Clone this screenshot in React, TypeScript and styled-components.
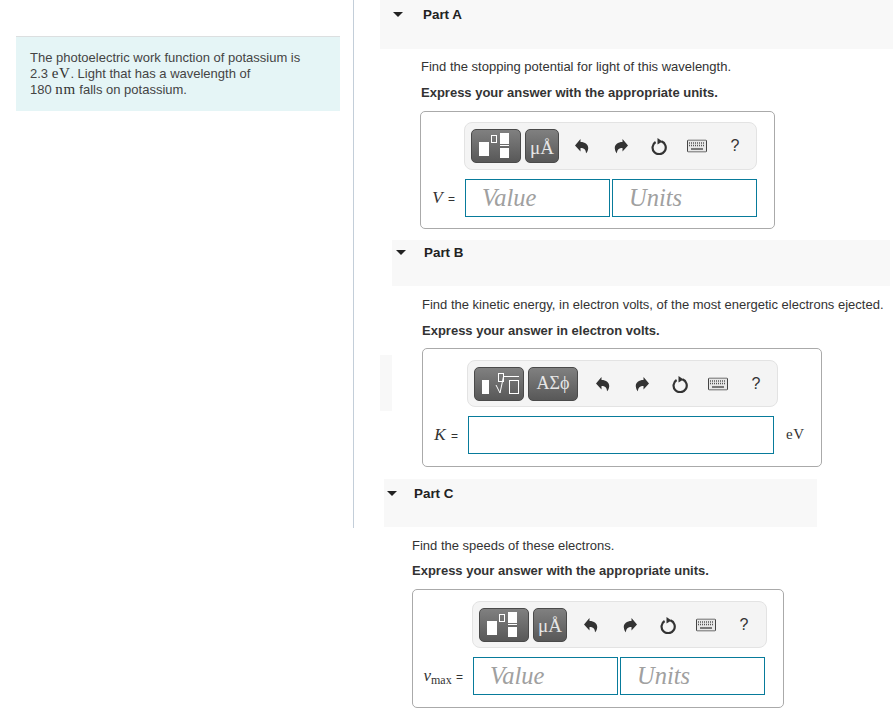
import React from "react";
import styled, { createGlobalStyle } from "styled-components";

const Global = createGlobalStyle`
  html, body { margin: 0; padding: 0; background: #fff; }
  body { font-family: "Liberation Sans", Arial, sans-serif; color: #333; }
`;

const Page = styled.div`
  display: flex;
  align-items: flex-start;
  width: 893px;
  height: 728px;
  overflow: hidden;
`;

const LeftColumn = styled.aside`
  box-sizing: border-box;
  flex: none;
  width: 354px;
  height: 528px;
  padding: 36px 13px 0 16px;
  border-right: 1px solid #c3ced9;
`;

const Problem = styled.div`
  box-sizing: border-box;
  height: 75px;
  padding: 13px 14px 0;
  border-top: 1px solid #dcdfe0;
  background: #e5f5f6;
  font-size: 13px;
  line-height: 16px;
  color: #444;
`;

const MathText = styled.span`
  font-family: "Liberation Serif", serif;
  font-size: 15px;
  line-height: 0;
  color: #333;
  letter-spacing: 0.6px;
`;

const RightColumn = styled.main`
  flex: 1;
  min-width: 0;
  display: flex;
  flex-direction: column;
`;

const Part = styled.section<{ $left: number; $height: number }>`
  position: relative;
  margin-left: ${(p) => p.$left}px;
  height: ${(p) => p.$height}px;
`;

const PartHeader = styled.div<{ $width: number; $height: number; $marginLeft: number; $caret: number; $gap: number; $top: number }>`
  box-sizing: border-box;
  display: flex;
  align-items: flex-start;
  width: ${(p) => p.$width}px;
  height: ${(p) => p.$height}px;
  margin-left: ${(p) => p.$marginLeft}px;
  padding: ${(p) => p.$top}px 0 0 ${(p) => p.$caret}px;
  gap: ${(p) => p.$gap}px;
  background: #f8f8f8;
  font-size: 13.4px;
  font-weight: 700;
  line-height: 14px;
  color: #222;
`;

const Caret = styled.i`
  flex: none;
  width: 0;
  height: 0;
  margin-top: 4px;
  border-left: 5.5px solid transparent;
  border-right: 5.5px solid transparent;
  border-top: 5.5px solid #222;
`;

const Prompt = styled.div<{ $left: number; $top: number }>`
  margin: ${(p) => p.$top}px 0 0 ${(p) => p.$left}px;
  font-size: 13px;
  line-height: 16px;
  white-space: nowrap;
  color: #333;
`;

const Instruction = styled(Prompt)`
  font-weight: 700;
`;

const AnswerBox = styled.div<{ $left: number; $width: number; $height: number; $top: number; $pad: number }>`
  box-sizing: border-box;
  width: ${(p) => p.$width}px;
  height: ${(p) => p.$height}px;
  margin: ${(p) => p.$top}px 0 0 ${(p) => p.$left}px;
  padding-top: ${(p) => p.$pad}px;
  border: 1px solid #aaa;
  border-radius: 5px;
  background: #fff;
`;

const Toolbar = styled.div<{ $left: number; $width: number; $height: number }>`
  box-sizing: border-box;
  position: relative;
  display: flex;
  align-items: center;
  width: ${(p) => p.$width}px;
  height: ${(p) => p.$height}px;
  margin-left: ${(p) => p.$left}px;
  padding-left: 6px;
  gap: 4px;
  border: 1px solid #e3e3e3;
  border-radius: 8px;
  background: #f4f4f4;
`;

const MathButton = styled.div<{ $wide?: boolean }>`
  box-sizing: border-box;
  display: flex;
  align-items: center;
  justify-content: center;
  flex: none;
  width: ${(p) => (p.$wide ? 50 : 34)}px;
  height: 34px;
  padding-top: 3px;
  border: 1px solid #4a4a4a;
  border-radius: 5px;
  background: linear-gradient(#808080, #585858);
  font-family: "Liberation Serif", serif;
  font-size: 19px;
  color: #e6e6e6;
`;

const IconButton = styled(MathButton)`
  padding-top: 0;
`;

const SymbolButton = styled(MathButton)`
  padding-top: 0;
  font-size: 18px;
`;

const Tools = styled.div`
  position: absolute;
  top: 0;
  bottom: 0;
  left: 0;
  right: 0;
  pointer-events: none;
`;

const Tool = styled.span<{ $x: number }>`
  position: absolute;
  top: 50%;
  left: ${(p) => p.$x}px;
  display: flex;
  align-items: center;
  justify-content: center;
  transform: translate(-50%, -50%);
  font-size: 16px;
  color: #333;
`;

const InputRow = styled.div`
  display: flex;
  align-items: center;
  margin-top: 9px;
`;

const Label = styled.div<{ $width: number }>`
  box-sizing: border-box;
  flex: none;
  width: ${(p) => p.$width}px;
  padding-right: 10px;
  text-align: right;
  font-size: 12px;
  color: #333;
  white-space: nowrap;
`;

const VarName = styled.span<{ $tight?: boolean }>`
  margin-right: ${(p) => (p.$tight ? 0 : 2)}px;
  font-family: "Liberation Serif", serif;
  font-size: 17px;
  font-style: italic;
  color: #333;
`;

const Sub = styled.span`
  position: relative;
  top: 3px;
  margin-right: 1px;
  font-family: "Liberation Serif", serif;
  font-size: 12px;
  line-height: 0;
`;

const Field = styled.div<{ $width: number }>`
  box-sizing: border-box;
  flex: none;
  width: ${(p) => p.$width}px;
  height: 38px;
  padding-left: 16px;
  margin-right: 2px;
  border: 1px solid #087b9b;
  background: #fff;
  font-family: "Liberation Serif", serif;
  font-size: 24.5px;
  font-style: italic;
  line-height: 35px;
  color: #a0a0a0;
`;

const Unit = styled.div`
  margin: 0 0 2px 10px;
  font-family: "Liberation Serif", serif;
  font-size: 15px;
  letter-spacing: 0.5px;
  color: #333;
`;

const Ghost = styled.div<{ $left: number; $width: number }>`
  position: absolute;
  top: 115px;
  left: ${(p) => p.$left}px;
  width: ${(p) => p.$width}px;
  height: 56px;
  background: #f8f8f8;
`;

const TemplateIcon = () => (
  <svg width="48" height="32" viewBox="0 0 48 32">
    <rect x="7" y="12" width="10" height="14" fill="#fff" />
    <rect x="19.5" y="5.5" width="5" height="7" fill="none" stroke="#fff" />
    <rect x="28" y="3" width="9" height="11" fill="#fff" />
    <rect x="28" y="15" width="9" height="1" fill="#fff" />
    <rect x="28" y="18" width="9" height="10" fill="#fff" />
  </svg>
);

const RadicalIcon = () => (
  <svg width="48" height="32" viewBox="0 0 48 32">
    <rect x="7" y="12" width="7" height="14" fill="#fff" />
    <rect x="23.5" y="5.5" width="5" height="8" fill="none" stroke="#fff" />
    <path d="M21 17 L25 25 L28.5 8.5 H44" fill="none" stroke="#fff" />
    <rect x="34.5" y="12.5" width="9" height="13" fill="none" stroke="#fff" />
  </svg>
);

const Undo = ({ flip }: { flip?: boolean }) => (
  <svg width="14" height="15" viewBox="0 0 14 15" style={flip ? { transform: "scaleX(-1)" } : undefined}>
    <path d="M0 7 L5.5 0.5 V3.5 C10 3.5 13.5 6 13.2 10 C13 12 12 14 11 15 C11 11 9 9.5 5.5 9.5 V13 Z" fill="#333" />
  </svg>
);

const Reload = () => (
  <svg width="18" height="18" viewBox="0 0 18 18">
    <path d="M5.6 5 A6.6 6.6 0 1 0 11.5 4.4" fill="none" stroke="#333" strokeWidth="2.2" />
    <path d="M7.5 1 L12.5 4.5 L7.5 7.5 Z" fill="#333" />
  </svg>
);

const Keyboard = () => (
  <svg width="20" height="13" viewBox="0 0 20 13">
    <rect x="0.5" y="0.5" width="19" height="12" rx="1" fill="#e8e8e8" stroke="#444" />
    <path d="M2 3.5 H18 M2 6 H18" stroke="#555" strokeWidth="1.3" strokeDasharray="1 1" fill="none" />
    <path d="M4 9.5 H16" stroke="#555" strokeWidth="1.6" fill="none" />
  </svg>
);

const ToolIcons = ({ xs }: { xs: number[] }) => (
  <Tools>
    <Tool $x={xs[0]}><Undo /></Tool>
    <Tool $x={xs[1]}><Undo flip /></Tool>
    <Tool $x={xs[2]}><Reload /></Tool>
    <Tool $x={xs[3]}><Keyboard /></Tool>
    <Tool $x={xs[4]}>?</Tool>
  </Tools>
);

const ToolbarFor = ({ left, width, height, radical, xs }: { left: number; width: number; height: number; radical?: boolean; xs: number[] }) => (
  <Toolbar $left={left} $width={width} $height={height}>
    <IconButton $wide>{radical ? <RadicalIcon /> : <TemplateIcon />}</IconButton>
    {radical ? (
      <SymbolButton $wide>ΑΣϕ</SymbolButton>
    ) : (
      <MathButton>μÅ</MathButton>
    )}
    <ToolIcons xs={xs} />
  </Toolbar>
);

export default function App() {
  return (
    <Page>
      <Global />
      <LeftColumn>
        <Problem>
          The photoelectric work function of potassium is
          <br />
          2.3 <MathText>eV</MathText>. Light that has a wavelength of
          <br />
          180 <MathText>nm</MathText> falls on potassium.
        </Problem>
      </LeftColumn>
      <RightColumn>
        <Part $left={26} $height={240}>
          <PartHeader $width={513} $height={49} $marginLeft={0} $caret={13} $gap={20} $top={8}>
            <Caret />
            <span>Part A</span>
          </PartHeader>
          <Prompt $left={41} $top={10}>Find the stopping potential for light of this wavelength.</Prompt>
          <Instruction $left={41} $top={10}>Express your answer with the appropriate units.</Instruction>
          <AnswerBox $left={40} $width={355} $height={118} $top={10} $pad={10}>
            <ToolbarFor left={43} width={293} height={48} xs={[117, 156, 194, 232, 270]} />
            <InputRow>
              <Label $width={44}><VarName>V</VarName> =</Label>
              <Field $width={145}>Value</Field>
              <Field $width={145}>Units</Field>
            </InputRow>
          </AnswerBox>
        </Part>
        <Part $left={28} $height={239}>
          <PartHeader $width={498} $height={46} $marginLeft={10} $caret={4} $gap={18} $top={6}>
            <Caret />
            <span>Part B</span>
          </PartHeader>
          <Prompt $left={40} $top={11}>Find the kinetic energy, in electron volts, of the most energetic electrons ejected.</Prompt>
          <Instruction $left={40} $top={10}>Express your answer in electron volts.</Instruction>
          <AnswerBox $left={40} $width={400} $height={119} $top={9} $pad={11}>
            <ToolbarFor left={44} width={311} height={47} radical xs={[135, 174, 212, 250, 288]} />
            <InputRow>
              <Label $width={45}><VarName>K</VarName> =</Label>
              <Field $width={306}></Field>
              <Unit>eV</Unit>
            </InputRow>
          </AnswerBox>
          <Ghost $left={-2} $width={12} />
        </Part>
        <Part $left={30} $height={249}>
          <PartHeader $width={433} $height={48} $marginLeft={0} $caret={3} $gap={17} $top={8}>
            <Caret />
            <span>Part C</span>
          </PartHeader>
          <Prompt $left={28} $top={11}>Find the speeds of these electrons.</Prompt>
          <Instruction $left={28} $top={9}>Express your answer with the appropriate units.</Instruction>
          <AnswerBox $left={28} $width={372} $height={119} $top={10} $pad={11}>
            <ToolbarFor left={59} width={295} height={47} xs={[118, 157, 195, 233, 271]} />
            <InputRow>
              <Label $width={60}><VarName $tight>v</VarName><Sub>max</Sub> =</Label>
              <Field $width={145}>Value</Field>
              <Field $width={145}>Units</Field>
            </InputRow>
          </AnswerBox>
        </Part>
      </RightColumn>
    </Page>
  );
}
